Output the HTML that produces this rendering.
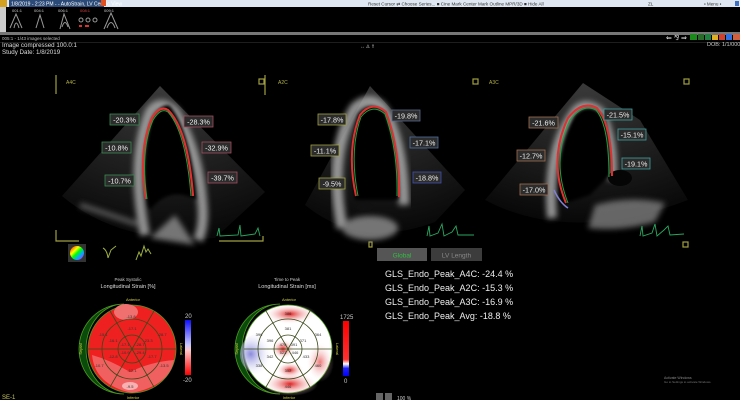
<!DOCTYPE html>
<html><head><meta charset="utf-8"><style>
html,body{margin:0;padding:0;background:#000;width:740px;height:400px;overflow:hidden;font-family:"Liberation Sans",sans-serif}
svg{display:block}
</style></head><body>
<svg width="740" height="400" viewBox="0 0 740 400" xmlns="http://www.w3.org/2000/svg" font-family="Liberation Sans, sans-serif">
<defs>
<filter id="b2"><feGaussianBlur stdDeviation="3"/></filter>
<filter id="b1"><feGaussianBlur stdDeviation="1.5"/></filter>
<radialGradient id="fan" cx="0.5" cy="0" r="1">
<stop offset="0" stop-color="#3a3a3a"/><stop offset="0.6" stop-color="#1c1c1c"/><stop offset="1" stop-color="#080808"/></radialGradient>
<radialGradient id="bl" cx="0.3" cy="0.5" r="0.6"><stop offset="0" stop-color="#8a8adc"/><stop offset="1" stop-color="#fff" stop-opacity="0"/></radialGradient>
<radialGradient id="rd" cx="0.5" cy="0.5" r="0.5"><stop offset="0" stop-color="#e02020"/><stop offset="1" stop-color="#fff" stop-opacity="0"/></radialGradient>
<linearGradient id="cb1" x1="0" y1="0" x2="0" y2="1"><stop offset="0" stop-color="#1010ff"/><stop offset="0.45" stop-color="#c8c8ff"/><stop offset="0.55" stop-color="#ffc8c8"/><stop offset="1" stop-color="#ff0000"/></linearGradient>
<linearGradient id="cb2" x1="0" y1="0" x2="0" y2="1"><stop offset="0" stop-color="#ff0000"/><stop offset="0.7" stop-color="#ff3030"/><stop offset="0.78" stop-color="#fff"/><stop offset="0.86" stop-color="#2020ff"/><stop offset="1" stop-color="#0000ff"/></linearGradient>
<linearGradient id="rgb" x1="0" y1="0" x2="1" y2="1"><stop offset="0" stop-color="#f00"/><stop offset="0.33" stop-color="#ff0"/><stop offset="0.5" stop-color="#0f0"/><stop offset="0.7" stop-color="#0af"/><stop offset="1" stop-color="#f0f"/></linearGradient>
</defs>

<rect x="0" y="0" width="740" height="7" fill="#dfe8f2"/>
<rect x="0" y="0" width="7" height="7" fill="#d4a020"/>
<rect x="9" y="0" width="95" height="7" fill="#2b4a78"/>
<text x="11" y="5.5" font-size="5" fill="#fff">1/8/2019 - 2:23 PM - - AutoStrain, LV Centric View</text>
<rect x="101" y="0" width="5" height="6" fill="#e05020"/>
<text x="368" y="5.5" font-size="4.6" fill="#333">Reset Cursor  ⇄ Choose Series...  ■ Cine  Mark Center  Mark Outline  MPR/3D  ■ Hide All</text>
<text x="648" y="5.5" font-size="4.6" fill="#333">ZL</text>
<text x="704" y="5.5" font-size="4.6" fill="#333">▪ Menu ▪</text>
<rect x="735" y="1" width="4" height="5" fill="#4070c0"/>
<rect x="0" y="7" width="6" height="26" fill="#ccc"/>
<g font-size="4" fill="#ccc">
<text x="12" y="12">001:1</text><text x="34" y="12">004:1</text><text x="58" y="12">006:1</text><text x="80" y="12" fill="#e04040">008:1</text><text x="104" y="12">009:1</text>
</g>
<g fill="none" stroke="#999" stroke-width="1">
<path d="M10 28 L16 14 L22 28 M14 28 Q16 18 19 28"/><path d="M36 28 L40 15 L44 28"/><path d="M60 29 L64 14 L70 29 M62 27 Q65 18 68 27"/>
<circle cx="81" cy="20" r="2"/><circle cx="88" cy="20" r="2"/><circle cx="95" cy="20" r="2"/>
<path d="M104 29 L111 13 L118 29 M107 28 Q111 17 115 28"/>
</g>
<rect x="79" y="25" width="3" height="2" fill="#e03030"/><rect x="85" y="25" width="4" height="2" fill="#e03030"/>
<rect x="0" y="32" width="740" height="3" fill="#777"/>
<text x="2" y="40" font-size="4.5" fill="#bbb">005:1 - 1/43 images selected</text>
<rect x="0" y="42" width="740" height="0.6" fill="#333"/>
<text x="2" y="47" font-size="6.2" fill="#ddd">Image compressed 100.0:1</text>
<text x="2" y="54" font-size="6.2" fill="#ddd">Study Date: 1/8/2019</text>
<text x="360" y="48" font-size="5" fill="#aaa">↔   ∆   ⇑</text>
<text x="666" y="40" font-size="7" fill="#eee">⇐</text><text x="674" y="40" font-size="7" fill="#ddd">⅋</text><text x="681" y="40" font-size="7" fill="#eee">⇒</text>
<rect x="690" y="34" width="7" height="6" fill="#1a8a1a"/><rect x="698" y="34" width="6" height="6" fill="#2a6a2a"/><rect x="705" y="34" width="6" height="6" fill="#208040"/>
<rect x="712" y="35" width="6" height="5" fill="#e0b020"/><rect x="719" y="34" width="6" height="6" fill="#d04030"/><rect x="726" y="34" width="6" height="6" fill="#3070e0"/><rect x="733" y="34" width="7" height="6" fill="#d06040"/>
<text x="707" y="46" font-size="5.5" fill="#ccc">DOB: 1/1/000</text>

<g stroke="#a0a040" stroke-width="1.2" fill="none">
<path d="M56 75 V94 M56 230 V241 H79 M265 75 V95 M263 236 V241 H219"/>
<rect x="259" y="79" width="5" height="5"/><rect x="473" y="79" width="5" height="5"/><rect x="684" y="79" width="5" height="5"/>
<rect x="683" y="242" width="5" height="5"/><rect x="369" y="242" width="3" height="5"/>
</g>
<text x="66" y="84" font-size="5" fill="#b0b040">A4C</text>
<text x="278" y="84" font-size="5" fill="#b0b040">A2C</text>
<text x="489" y="84" font-size="5" fill="#b0b040">A3C</text>

<!-- A4C echo -->
<path d="M160 86 L62 196 Q120 245 215 238 L265 192 Z" fill="url(#fan)"/>
<g filter="url(#b2)" opacity="0.85">
<path d="M145 235 Q130 160 150 112 Q160 98 175 112 Q198 150 202 200 Q205 225 198 240" fill="none" stroke="#aaa" stroke-width="10"/>
<path d="M150 238 L195 245 L175 215 Z" fill="#888"/>
<path d="M80 205 L140 225" stroke="#666" stroke-width="5"/>
</g>
<path d="M148 205 Q140 160 152 120 Q162 102 170 106 Q190 130 196 200 Q170 185 150 210 Z" fill="#030303" filter="url(#b1)"/>
<path d="M146 199 Q138 150 152 118 Q160 105 168 110 Q188 130 193 196" fill="none" stroke="#e03030" stroke-width="2.2"/>
<path d="M147 199 Q140 150 153 120 Q161 107 168 112 Q186 132 191 196" fill="none" stroke="#20a040" stroke-width="1"/>
<!-- A2C -->
<path d="M370 86 L305 205 Q360 250 435 222 L465 190 Z" fill="url(#fan)"/>
<g filter="url(#b2)" opacity="0.85">
<path d="M342 228 Q328 150 355 108 Q370 95 382 108 Q403 140 404 205" fill="none" stroke="#aaa" stroke-width="11"/>
<ellipse cx="370" cy="228" rx="28" ry="12" fill="#888"/>
</g>
<path d="M355 200 Q348 150 358 115 Q370 100 385 112 Q400 150 398 200 Z" fill="#030303" filter="url(#b1)"/>
<path d="M356 196 Q346 150 360 115 Q372 100 386 112 Q400 150 399 197" fill="none" stroke="#e03030" stroke-width="2"/>
<path d="M358 196 Q349 150 361 117 Q372 103 385 114 Q398 150 397 196" fill="none" stroke="#20a040" stroke-width="1"/>
<ellipse cx="365" cy="207" rx="8" ry="5" fill="#111"/>
<!-- A3C -->
<path d="M583 83 L485 200 Q570 245 688 200 L640 120 Z" fill="url(#fan)"/>
<g filter="url(#b2)" opacity="0.85">
<path d="M552 218 Q546 150 575 112 Q585 100 600 112 Q614 140 612 180" fill="none" stroke="#aaa" stroke-width="10"/>
<path d="M595 205 Q630 195 665 203 L655 222 Q620 232 588 228 Z" fill="#777"/>
</g>
<path d="M560 205 Q555 150 575 115 Q590 100 605 118 Q612 150 610 175 L590 195 Z" fill="#030303" filter="url(#b1)"/>
<ellipse cx="620" cy="178" rx="12" ry="8" fill="#050505"/>
<path d="M566 203 Q548 160 568 118 Q582 100 597 108 Q612 125 612 176" fill="none" stroke="#e03030" stroke-width="2"/>
<path d="M568 203 Q551 160 570 120 Q583 103 596 110 Q609 125 609 177" fill="none" stroke="#20a040" stroke-width="1"/>
<path d="M554 190 Q560 203 568 208" stroke="#8080d0" stroke-width="1.5" fill="none"/>

<g fill="none" stroke="#2aa860" stroke-width="0.9">
<path d="M217 236 L219 228 L220 236 L238 235 L240 225 L241 236 L255 234 L258 228 L260 236"/>
<path d="M427 236 L429 226 L430 236 L438 233 L442 224 L444 236 L452 232 L456 226 L458 235 L474 235"/>
<path d="M640 236 L642 226 L643 236 L652 233 L655 224 L657 236 L664 230 L668 226 L670 235 L684 234"/>
</g>

<g font-size="7.2" fill="#eee" text-anchor="middle">
<g stroke-width="0.8" fill="#2c2c2c">
<rect x="110" y="114" width="29" height="11" stroke="#3a8a50"/><rect x="184" y="116" width="29" height="11" stroke="#a05060"/>
<rect x="102" y="142" width="29" height="11" stroke="#3a8a50"/><rect x="202" y="142" width="29" height="11" stroke="#a05060"/>
<rect x="105" y="175" width="29" height="11" stroke="#3a8a50"/><rect x="208" y="172" width="29" height="11" stroke="#a05060"/>
<rect x="318" y="114" width="28" height="11" stroke="#a0a040"/><rect x="392" y="110" width="28" height="11" stroke="#5a6a8a"/>
<rect x="311" y="145" width="28" height="11" stroke="#a0a040"/><rect x="410" y="137" width="28" height="11" stroke="#5070a0"/>
<rect x="319" y="178" width="26" height="11" stroke="#a0a040"/><rect x="413" y="172" width="28" height="11" stroke="#4050b0"/>
<rect x="529" y="117" width="29" height="11" stroke="#a07050"/><rect x="604" y="109" width="28" height="11" stroke="#40a0a0"/>
<rect x="517" y="150" width="28" height="11" stroke="#a07050"/><rect x="618" y="129" width="28" height="11" stroke="#40a0a0"/>
<rect x="520" y="184" width="28" height="11" stroke="#a07050"/><rect x="622" y="158" width="28" height="11" stroke="#40a0a0"/>
</g>
<text x="124.5" y="122.5">-20.3%</text><text x="198.5" y="124.5">-28.3%</text>
<text x="116.5" y="150.5">-10.8%</text><text x="216.5" y="150.5">-32.9%</text>
<text x="119.5" y="183.5">-10.7%</text><text x="222.5" y="180.5">-39.7%</text>
<text x="332" y="122.5">-17.8%</text><text x="406" y="118.5">-19.8%</text>
<text x="325" y="153.5">-11.1%</text><text x="424" y="145.5">-17.1%</text>
<text x="332" y="186.5">-9.5%</text><text x="427" y="180.5">-18.8%</text>
<text x="543.5" y="125.5">-21.6%</text><text x="618" y="117.5">-21.5%</text>
<text x="531" y="158.5">-12.7%</text><text x="632" y="137.5">-15.1%</text>
<text x="534" y="192.5">-17.0%</text><text x="636" y="166.5">-19.1%</text>
</g>

<rect x="68" y="244" width="18" height="18" fill="#333"/>
<circle cx="77" cy="253" r="7" fill="url(#rgb)"/>
<path d="M103 248 Q107 250 108 258 L111 250 L116 246" fill="none" stroke="#a0b040" stroke-width="1"/>
<path d="M136 260 L139 252 L141 256 L144 246 L146 252 L148 249 L151 254" fill="none" stroke="#a0b040" stroke-width="1"/>

<!-- bulls-eye 1 -->
<text x="128" y="281" font-size="4.5" fill="#ccc" text-anchor="middle">Peak Systolic</text>
<text x="128" y="288" font-size="5.5" fill="#ddd" text-anchor="middle">Longitudinal Strain [%]</text>
<path d="M132 304 A45 45 0 0 0 132 394 A38 45 0 0 1 132 304 Z" fill="#0a4a0a" stroke="#4a9a20" stroke-width="0.8" transform="translate(-8 0)"/>
<circle cx="132" cy="349" r="44" fill="#ee2020" stroke="#4a9a20" stroke-width="0.8"/>
<ellipse cx="126" cy="312" rx="12" ry="8" fill="#f07070"/>
<path d="M92 355 Q110 360 130 372 Q150 362 174 360 Q170 385 132 393 Q95 385 92 355 Z" fill="#f06060"/>
<ellipse cx="130" cy="386" rx="8" ry="4" fill="#f8b0b0"/>
<g fill="none" stroke="#3a4a1a" stroke-width="0.8">
<circle cx="132" cy="349" r="30"/><circle cx="132" cy="349" r="14"/>
<path d="M88 349 H176 M132 349 L110 311 M132 349 L154 311 M132 349 L110 387 M132 349 L154 387"/>
</g>
<g font-size="4" fill="#333" text-anchor="middle">
<text x="131" y="318">-13.8</text><text x="103" y="336">-15.1</text><text x="162" y="336">-28.7</text><text x="132" y="330">-17.1</text>
<text x="113" y="342">-16.1</text><text x="148" y="342">-23.3</text><text x="125" y="346">-17.1</text><text x="140" y="346">-28.7</text>
<text x="125" y="354">-10.9</text><text x="140" y="354">-29.4</text><text x="113" y="358">-12.8</text><text x="152" y="358">-17.7</text>
<text x="99" y="367">-10.7</text><text x="164" y="367">-13.5</text><text x="132" y="372">-12.1</text><text x="130" y="388">-9.5</text>
</g>
<text x="133" y="301" font-size="4" fill="#d0d040" text-anchor="middle">Anterior</text>
<text x="133" y="399" font-size="4" fill="#d0d040" text-anchor="middle">Inferior</text>
<text x="82" y="349" font-size="4" fill="#d0d040" transform="rotate(-90 82 349)" text-anchor="middle">Septal</text>
<text x="180" y="349" font-size="4" fill="#d0d040" transform="rotate(90 180 349)" text-anchor="middle">Lateral</text>
<rect x="185" y="320" width="6" height="55" fill="url(#cb1)"/>
<text x="185" y="318" font-size="6" fill="#ccc">20</text><text x="183" y="382" font-size="6" fill="#ccc">-20</text>

<!-- bulls-eye 2 -->
<text x="287" y="281" font-size="4.5" fill="#ccc" text-anchor="middle">Time to Peak</text>
<text x="287" y="288" font-size="5.5" fill="#ddd" text-anchor="middle">Longitudinal Strain [ms]</text>
<path d="M288 304 A45 45 0 0 0 288 394 A38 45 0 0 1 288 304 Z" fill="#0a4a0a" stroke="#4a9a20" stroke-width="0.8" transform="translate(-8 0)"/>
<circle cx="288" cy="349" r="44" fill="#fff" stroke="#4a9a20" stroke-width="0.8"/>
<ellipse cx="290" cy="314" rx="26" ry="10" fill="url(#rd)"/>
<ellipse cx="290" cy="384" rx="28" ry="12" fill="url(#rd)"/>
<ellipse cx="290" cy="370" rx="14" ry="8" fill="url(#rd)"/>
<ellipse cx="283" cy="349" rx="12" ry="10" fill="url(#rd)"/>
<ellipse cx="258" cy="354" rx="18" ry="20" fill="url(#bl)"/>
<ellipse cx="320" cy="362" rx="14" ry="20" fill="url(#rd)" opacity="0.6"/>
<g fill="none" stroke="#3a4a1a" stroke-width="0.8">
<circle cx="288" cy="349" r="30"/><circle cx="288" cy="349" r="14"/>
<path d="M244 349 H332 M288 349 L266 311 M288 349 L310 311 M288 349 L266 387 M288 349 L310 387"/>
</g>
<g font-size="4" fill="#333" text-anchor="middle">
<text x="288" y="315">386</text><text x="259" y="336">396</text><text x="318" y="336">364</text><text x="288" y="330">381</text>
<text x="270" y="342">396</text><text x="303" y="342">371</text><text x="283" y="346">470</text><text x="294" y="346">391</text>
<text x="283" y="354">523</text><text x="295" y="354">446</text><text x="270" y="358">342</text><text x="306" y="358">433</text>
<text x="259" y="367">338</text><text x="318" y="367">460</text><text x="288" y="372">352</text><text x="288" y="388">446</text>
</g>
<text x="289" y="301" font-size="4" fill="#d0d040" text-anchor="middle">Anterior</text>
<text x="289" y="399" font-size="4" fill="#d0d040" text-anchor="middle">Inferior</text>
<text x="238" y="349" font-size="4" fill="#d0d040" transform="rotate(-90 238 349)" text-anchor="middle">Septal</text>
<text x="336" y="349" font-size="4" fill="#d0d040" transform="rotate(90 336 349)" text-anchor="middle">Lateral</text>
<rect x="343" y="321" width="6" height="55" fill="url(#cb2)"/>
<text x="340" y="319" font-size="6" fill="#ccc">1725</text><text x="344" y="383" font-size="6" fill="#ccc">0</text>

<rect x="377" y="248" width="50" height="13" fill="#555"/>
<text x="402" y="257.5" font-size="6.5" fill="#30c040" text-anchor="middle">Global</text>
<rect x="431" y="248" width="51" height="13" fill="#3c3c3c"/>
<text x="456.5" y="257.5" font-size="6.5" fill="#888" text-anchor="middle">LV Length</text>
<g font-size="9" fill="#eee">
<text x="385" y="277">GLS_Endo_Peak_A4C: -24.4 %</text>
<text x="385" y="291">GLS_Endo_Peak_A2C: -15.3 %</text>
<text x="385" y="305">GLS_Endo_Peak_A3C: -16.9 %</text>
<text x="385" y="319">GLS_Endo_Peak_Avg: -18.8 %</text>
</g>
<text x="664" y="379" font-size="3.5" fill="#888">Activate Windows</text>
<text x="664" y="383" font-size="3" fill="#777">Go to Settings to activate Windows.</text>
<rect x="376" y="393" width="7" height="7" fill="#666"/><rect x="385" y="393" width="7" height="7" fill="#666"/>
<text x="397" y="400" font-size="5" fill="#ccc">100 %</text>
<text x="2" y="399" font-size="6" fill="#c8c860">SE-1</text>
</svg>
</body></html>
